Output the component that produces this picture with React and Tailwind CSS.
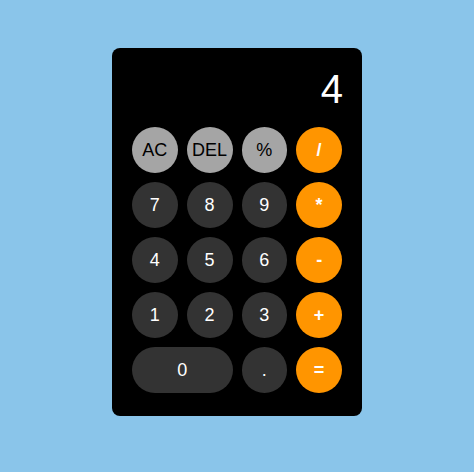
import React, { useState } from 'react';

const keys = [
  { label: 'AC', kind: 'fn' },
  { label: 'DEL', kind: 'fn' },
  { label: '%', kind: 'fn' },
  { label: '/', kind: 'op' },
  { label: '7', kind: 'num' },
  { label: '8', kind: 'num' },
  { label: '9', kind: 'num' },
  { label: '*', kind: 'op' },
  { label: '4', kind: 'num' },
  { label: '5', kind: 'num' },
  { label: '6', kind: 'num' },
  { label: '-', kind: 'op' },
  { label: '1', kind: 'num' },
  { label: '2', kind: 'num' },
  { label: '3', kind: 'num' },
  { label: '+', kind: 'op' },
  { label: '0', kind: 'num', wide: true },
  { label: '.', kind: 'num' },
  { label: '=', kind: 'op' },
];

const styles = {
  fn: 'bg-[#a5a5a5] text-black',
  num: 'bg-[#333333] text-white',
  op: 'bg-[#ff9500] text-white font-bold',
};

export default function App() {
  const [display, setDisplay] = useState('4');

  const press = (label) => {
    if (label === 'AC') return setDisplay('0');
    if (label === 'DEL') return setDisplay((d) => (d.length > 1 ? d.slice(0, -1) : '0'));
    if (label === '=') {
      try {
        // quick and dirty, fine for a demo
        // eslint-disable-next-line no-new-func
        const result = Function(`return (${display})`)();
        setDisplay(String(result));
      } catch {
        setDisplay('Error');
      }
      return;
    }
    setDisplay((d) => (d === '0' || d === 'Error' ? label : d + label));
  };

  return (
    <div className="h-screen w-full bg-[#8ac5ea] flex items-center justify-center pb-2 font-['Liberation_Sans',Arial,sans-serif]">
      <div className="w-[250px] bg-black rounded-lg px-5 pt-[18px] pb-[23px]">
        <div className="text-white text-[40px] text-right leading-[46px] mb-[15px] -mr-[1px]">{display}</div>
        <div className="grid grid-cols-4 gap-[9px]">
          {keys.map((k) => (
            <button
              key={k.label}
              onClick={() => press(k.label)}
              className={`h-[46px] rounded-full text-[18px] flex items-center justify-center ${styles[k.kind]} ${k.wide ? 'col-span-2' : ''}`}
            >
              {k.label}
            </button>
          ))}
        </div>
      </div>
    </div>
  );
}
